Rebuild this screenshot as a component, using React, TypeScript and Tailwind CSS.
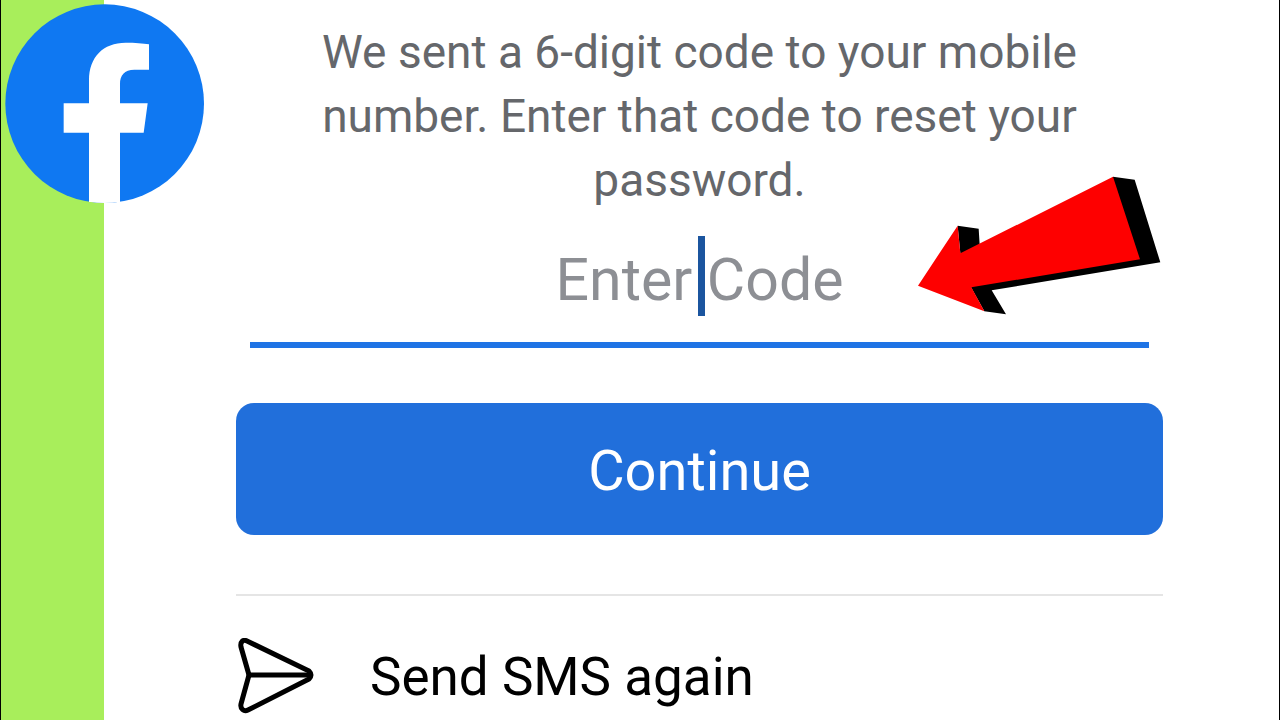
const FacebookLogo = () => (
  <svg viewBox="0 0 600 600" className="w-[200px] h-[200px]" role="img" aria-label="Facebook">
    <circle cx="299" cy="299" r="298" fill="#0f78f2" />
    <path
      d="M252 594V386H176V298H252V228C252 160 294 116 362 116C390 116 414 118 432 121V197H388C358 197 345 214 345 240V298H428L416 386H345V594Z"
      fill="#fff"
    />
    {/* foot of the stem follows the circle */}
    <path d="M252 590H345V593Q322 597 299 597Q275 597 252 593Z" fill="#fff" />
  </svg>
);

const PointerArrow = () => (
  <svg viewBox="0 0 732 420" className="w-[244px] h-[140px]" aria-hidden="true">
    <path
      d="M122 149L185 158L188 206L580 12L588 2L653 11L730 259L224 343L267 415L202 406L160 330L130 232Z"
      fill="#000"
    />
    <path d="M3 329L122 149L130 232L588 2L669 250L163 334L202 406Z" fill="#fe0000" />
  </svg>
);

const SendIcon = () => (
  <svg
    viewBox="0 0 76 76"
    className="w-[76px] h-[76px] shrink-0"
    fill="none"
    stroke="#000"
    strokeWidth="5"
    strokeLinecap="round"
    strokeLinejoin="round"
    aria-hidden="true"
  >
    <path d="M9 3L71 33Q75 37 71 41L10 72C6 74 2 71 3 66L11 37L3 9C2 4 5 1 9 3Z" />
    <path d="M11 37H72" />
  </svg>
);

const App = () => {
  return (
    <div className="relative flex h-screen overflow-hidden border-x border-black bg-white font-['Roboto',sans-serif]">
      {/* Side stripe */}
      <aside className="w-[103px] shrink-0 bg-[#a8ee5b]" />
      <div className="absolute left-1 top-1">
        <FacebookLogo />
      </div>

      <main className="flex-1 pl-[132px] pr-[116px] pt-5">
        <form onSubmit={(e) => e.preventDefault()}>
          <p id="code-help" className="px-16 text-center text-[46px] leading-[64px] text-[#65676b]">
            We sent a 6-digit code to your mobile number. Enter that code to reset your password.
          </p>

          {/* Code field */}
          <div className="relative mx-[14px]">
            <input
              type="text"
              inputMode="numeric"
              aria-label="Enter Code"
              aria-describedby="code-help"
              placeholder="Enter Code"
              className="block h-[136px] w-full border-b-6 border-[#1f74e5] pt-1 text-center text-[59px] text-black outline-none placeholder:text-[#8d8f94]"
            />
            <span className="absolute left-1/2 top-6 h-20 w-[7px] -translate-x-0.5 bg-[#1b559f]" />
            <div className="absolute -right-3 -top-9">
              <PointerArrow />
            </div>
          </div>

          <button
            type="submit"
            className="mt-[55px] block h-[132px] w-full rounded-[18px] bg-[#216fdb] pt-1 text-[56px] text-white"
          >
            Continue
          </button>
        </form>

        <hr className="mt-[59px] border-t-2 border-[#e5e5e5]" />

        <button
          type="button"
          className="mt-[38px] flex w-full items-center gap-14 pl-0.5 text-left text-[53px] text-black"
        >
          <SendIcon />
          <span className="pt-1">Send SMS again</span>
        </button>
      </main>
    </div>
  );
};

export default App;
